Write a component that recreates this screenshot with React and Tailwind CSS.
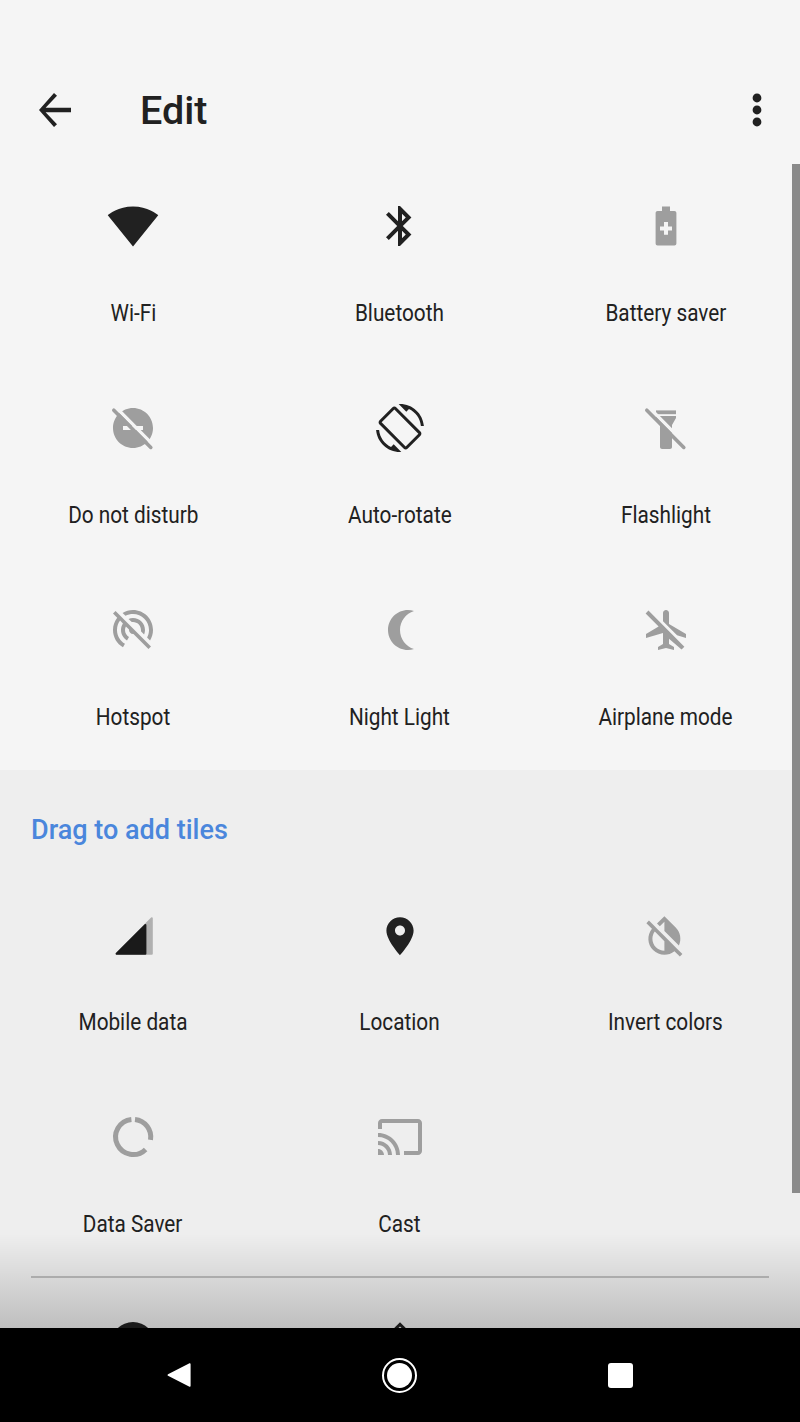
const DARK = "#212121";
const GRAY = "#9e9e9e";

function Slash({ bg }) {
  return (
    <>
      <path d="M3.8 2 L22.2 20.6" stroke={bg} strokeWidth="1.6" fill="none" />
      <path d="M2.4 3.1 L20.9 21.7" stroke={GRAY} strokeWidth="1.8" strokeLinecap="round" fill="none" />
    </>
  );
}

function Icon({ color = GRAY, children, size = "w-12 h-12" }) {
  return (
    <svg viewBox="0 0 24 24" fill={color} className={size}>
      {children}
    </svg>
  );
}

const icons = {
  wifi: (
    <Icon color={DARK} size="w-[52px] h-[52px]">
      <path d="M12.01 21.49L23.64 7c-.45-.34-4.93-4-11.64-4C5.28 3 .81 6.66.36 7l11.64 14.49z" />
    </Icon>
  ),
  bluetooth: (
    <Icon color={DARK}>
      <path d="M17.71 7.71L12 2h-1v7.59L6.41 5 5 6.41 10.59 12 5 17.59 6.41 19 11 14.41V22h1l5.71-5.71-4.3-4.29 4.3-4.29zM13 5.83l1.88 1.88L13 9.59V5.83zm1.88 10.46L13 18.17v-3.76l1.88 1.88z" />
    </Icon>
  ),
  battery: (
    <Icon>
      <path
        fillRule="evenodd"
        d="M16.2 4.5h-2.2V2.2h-4v2.3H7.8c-.55 0-1 .45-1 1v15.2c0 .55.45 1 1 1h8.4c.55 0 1-.45 1-1V5.5c0-.55-.45-1-1-1zm-1.2 9.7h-2v2.2h-2v-2.2H9v-2h2V10h2v2.2h2v2z"
      />
    </Icon>
  ),
  dnd: (
    <Icon>
      <path
        fillRule="evenodd"
        d="M12 2C6.48 2 2 6.48 2 12s4.48 10 10 10 10-4.48 10-10S17.52 2 12 2zM7 11h10v2H7z"
      />
      <Slash bg="#f5f5f5" />
    </Icon>
  ),
  rotate: (
    <Icon color={DARK}>
      <path d="M16.48 2.52c3.27 1.55 5.61 4.72 5.97 8.48h1.5C23.44 4.84 18.29 0 12 0l-.66.03 3.81 3.81 1.33-1.32zm-6.25-.77c-.59-.59-1.54-.59-2.12 0L1.75 8.11c-.59.59-.59 1.54 0 2.12l12.02 12.02c.59.59 1.54.59 2.12 0l6.36-6.36c.59-.59.59-1.54 0-2.12L10.23 1.75zm4.6 19.44L2.81 9.17l6.36-6.36 12.02 12.02-6.36 6.36zm-7.31.29C4.25 19.94 1.91 16.76 1.55 13H.05C.56 19.16 5.71 24 12 24l.66-.03-3.81-3.81-1.33 1.32z" />
    </Icon>
  ),
  flash: (
    <Icon>
      <path d="M7 3.2h10v1.9H7z" />
      <path d="M7 6h10v1l-2 3.5v11c0 .5-.4 1-1 1h-4c-.5 0-1-.5-1-1v-11L7 7z" />
      <Slash bg="#f5f5f5" />
    </Icon>
  ),
  hotspot: (
    <Icon>
      <path d="M17.56 14.24c.28-.69.44-1.45.44-2.24 0-3.31-2.69-6-6-6-.79 0-1.55.16-2.24.44l1.62 1.62c.2-.03.41-.06.62-.06 2.21 0 4 1.79 4 4 0 .21-.02.42-.05.63l1.61 1.61zM12 4c4.42 0 8 3.58 8 8 0 1.35-.35 2.62-.95 3.74l1.47 1.47C21.46 15.69 22 13.91 22 12c0-5.52-4.48-10-10-10-1.91 0-3.69.55-5.21 1.47l1.46 1.46C9.37 4.34 10.65 4 12 4zM3.27 2.5L2 3.77l2.1 2.1C2.79 7.57 2 9.69 2 12c0 3.7 2.01 6.92 4.99 8.65l1-1.73C5.61 17.53 4 14.96 4 12c0-1.76.57-3.38 1.53-4.69l1.43 1.44C6.36 9.68 6 10.8 6 12c0 2.22 1.21 4.15 3 5.19l1-1.74c-1.19-.7-2-1.97-2-3.45 0-.65.17-1.25.44-1.79l1.58 1.58L10 12c0 1.1.9 2 2 2l.21-.02.01.01 7.51 7.51L21 20.23 4.27 3.5l-1-1z" />
    </Icon>
  ),
  night: (
    <Icon>
      <path
        transform="translate(25 0) scale(-1 1)"
        d="M9 2c-1.05 0-2.05.16-3 .46 4.06 1.27 7 5.06 7 9.54 0 4.48-2.94 8.27-7 9.54.95.3 1.95.46 3 .46 5.52 0 10-4.48 10-10S14.52 2 9 2z"
      />
    </Icon>
  ),
  airplane: (
    <Icon>
      <path d="M10.5 7.67V3.5c0-.83.67-1.5 1.5-1.5s1.5.67 1.5 1.5V9l8.5 5v2l-4.49-1.32-7.01-7.01zm9.28 14.11l1.41-1.41-7.69-7.69L3.22 2.3 1.81 3.71l6.5 6.5L2 14v2l8.5-2.5V19L8 20.5V22l4-1 4 1v-1.5L13.5 19v-2.67l6.28 5.45z" />
    </Icon>
  ),
  signal: (
    <Icon color="#b0b0b0">
      <path d="M3.8 21.4h17.6V3.6z" stroke="#b0b0b0" strokeWidth="1" strokeLinejoin="round" />
      <path d="M3.8 21.4h14.4V7z" fill="#1a1a1a" stroke="#1a1a1a" strokeWidth="1" strokeLinejoin="round" />
    </Icon>
  ),
  location: (
    <Icon color={DARK}>
      <path
        transform="translate(0 .5)"
        d="M12 2.6C8.3 2.6 5.2 5.6 5.2 9.3c0 5 6.8 12.3 6.8 12.3s6.8-7.3 6.8-12.3c0-3.7-3.1-6.7-6.8-6.7zm0 9.2c-1.38 0-2.5-1.12-2.5-2.5s1.12-2.5 2.5-2.5 2.5 1.12 2.5 2.5-1.12 2.5-2.5 2.5z"
      />
    </Icon>
  ),
  invert: (
    <Icon>
      <path
        transform="translate(-.8 .3)"
        d="M20.65 20.87l-2.35-2.35-6.3-6.29-3.56-3.57-1.42-1.41L4.27 4.5 3 5.77l2.78 2.78c-2.55 3.14-2.36 7.76.56 10.69C7.9 20.8 9.95 21.58 12 21.58c1.79 0 3.57-.59 5.03-1.78l2.7 2.7L21 21.23l-.35-.36zM12 19.59c-1.6 0-3.11-.62-4.24-1.76C6.62 16.69 6 15.19 6 13.59c0-1.32.43-2.57 1.21-3.6L12 14.77v4.82zM12 5.1v4.58l7.25 7.26c1.37-2.96.84-6.57-1.6-9.01L12 2.27l-3.7 3.7 1.41 1.41L12 5.1z"
      />
    </Icon>
  ),
  saver: (
    <Icon>
      <path
        d="M11.2 3.2A8.8 8.8 0 1 0 18.3 18.2M13 3.2A8.8 8.8 0 0 1 20.75 13.4"
        fill="none"
        stroke={GRAY}
        strokeWidth="2.5"
      />
    </Icon>
  ),
  cast: (
    <Icon>
      <path d="M21 3H3c-1.1 0-2 .9-2 2v3h2V5h18v14h-7v2h7c1.1 0 2-.9 2-2V5c0-1.1-.9-2-2-2zM1 18v3h3c0-1.66-1.34-3-3-3zm0-4v2c2.76 0 5 2.24 5 5h2c0-3.87-3.13-7-7-7zm0-4v2c4.97 0 9 4.03 9 9h2c0-6.08-4.93-11-11-11z" />
    </Icon>
  ),
};

function Tile({ icon, label }) {
  return (
    <div className="h-[202px] flex flex-col items-center pt-[38px]">
      <div className="h-12 flex items-center justify-center">{icons[icon]}</div>
      <div className="mt-[47px] h-8 leading-8 text-[24px] text-[#212121] whitespace-nowrap scale-x-[0.865]">
        {label}
      </div>
    </div>
  );
}

export default function App() {
  return (
    <div className="relative w-[800px] h-[1422px] overflow-hidden flex flex-col bg-[#f5f5f5] font-[Roboto,sans-serif]">
      <div className="h-[164px] shrink-0 pt-[86px] pl-[31px] pr-[19px] flex items-start">
        <svg viewBox="0 0 24 24" fill={DARK} className="w-12 h-12">
          <path d="M20 10.9H7.3l5.7-6L11.5 3.5 4 12l7.5 8.5 1.5-1.4-5.7-6H20z" />
        </svg>
        <div className="ml-[61px] mt-px h-12 leading-[48px] text-[39.5px] font-medium text-[#212121]">
          Edit
        </div>
        <svg viewBox="0 0 24 24" fill={DARK} className="w-12 h-12 ml-auto">
          <path d="M12 8.2c1.2 0 2.2-1 2.2-2.2s-1-2.2-2.2-2.2-2.2 1-2.2 2.2 1 2.2 2.2 2.2zm0 1.6c-1.2 0-2.2 1-2.2 2.2s1 2.2 2.2 2.2 2.2-1 2.2-2.2-1-2.2-2.2-2.2zm0 6c-1.2 0-2.2 1-2.2 2.2s1 2.2 2.2 2.2 2.2-1 2.2-2.2-1-2.2-2.2-2.2z" />
        </svg>
      </div>

      <div className="grid grid-cols-[266px_267px_265px] shrink-0">
        <Tile icon="wifi" label="Wi-Fi" />
        <Tile icon="bluetooth" label="Bluetooth" />
        <Tile icon="battery" label="Battery saver" />
        <Tile icon="dnd" label="Do not disturb" />
        <Tile icon="rotate" label="Auto-rotate" />
        <Tile icon="flash" label="Flashlight" />
        <Tile icon="hotspot" label="Hotspot" />
        <Tile icon="night" label="Night Light" />
        <Tile icon="airplane" label="Airplane mode" />
      </div>

      <div className="relative flex-1 min-h-0 overflow-hidden bg-[#eeeeee]">
        <div className="h-[103px] pt-[42px] pl-[31px] text-[27px] leading-9 font-medium text-[#4a86dc]">
          Drag to add tiles
        </div>
        <div className="grid grid-cols-[266px_267px_265px]">
          <Tile icon="signal" label="Mobile data" />
          <Tile icon="location" label="Location" />
          <Tile icon="invert" label="Invert colors" />
          <Tile icon="saver" label="Data Saver" />
          <Tile icon="cast" label="Cast" />
        </div>
        <div className="mx-[31px] -mt-[1px] h-[2px] bg-[#bdbdbd]" />
        <div className="grid grid-cols-[266px_268px_266px] pt-[44px]">
          <div className="flex justify-center">
            <div className="w-[44px] h-[44px] rounded-full bg-[#212121]" />
          </div>
          <div className="flex justify-center">
            <div className="mt-[6px] w-7 h-7 rotate-45 border-[3px] border-[#212121]" />
          </div>
        </div>
        <div className="absolute left-0 right-0 bottom-0 h-[94px] bg-linear-to-b from-black/0 to-black/20" />
      </div>

      <div className="h-[94px] shrink-0 bg-black flex items-center">
        <div className="w-full grid grid-cols-3 items-center">
          <div className="flex justify-center items-center pl-[92px]">
            <svg viewBox="0 0 24 26" fill="white" className="w-[24px] h-[26px]">
              <path d="M22 1.5c.8-.6 1.6-.2 1.6.8v21.4c0 1-.8 1.4-1.6.8L1 13.8c-.6-.5-.6-1.1 0-1.6z" />
            </svg>
          </div>
          <div className="flex justify-center items-center">
            <div className="w-[35px] h-[35px] rounded-full border-2 border-white p-[3px]">
              <div className="w-full h-full rounded-full bg-white" />
            </div>
          </div>
          <div className="flex justify-center items-center pr-[92px]">
            <div className="w-[25px] h-[25px] rounded-[3px] bg-white" />
          </div>
        </div>
      </div>

      <div className="absolute right-0 top-[164px] w-2 h-[1029px] bg-[#8a8a8a]" />
    </div>
  );
}
